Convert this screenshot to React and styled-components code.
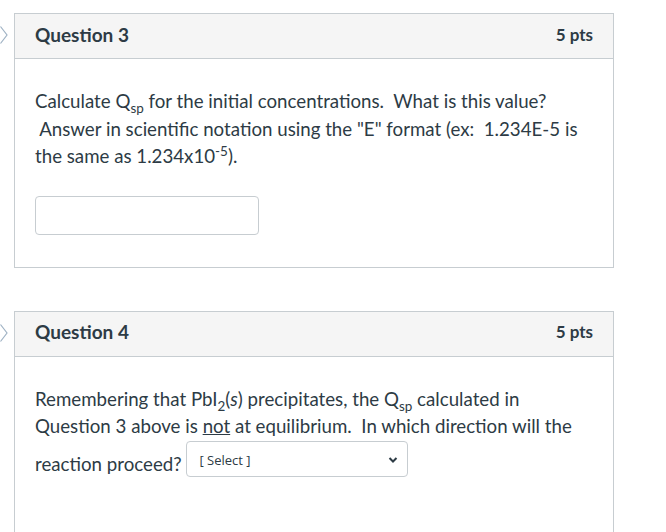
import styled, { createGlobalStyle } from 'styled-components';

const GlobalStyle = createGlobalStyle`
	html, body {
		margin: 0;
		padding: 0;
		background: #ffffff;
	}
	body {
		font-family: Lato, "Noto Sans", sans-serif;
		color: #2d3b45;
	}
`;

const Page = styled.div`
	display: flex;
	flex-direction: column;
	gap: 43px;
	padding: 13px 0 0 14px;
	width: 600px;
`;

const QuestionWrap = styled.div`
	position: relative;
`;

const Pointer = styled.svg`
	position: absolute;
	left: -14px;
	top: 13px;
	width: 8px;
	height: 18px;
`;

const Card = styled.div`
	border: 1px solid #c7cdd1;
	background: #ffffff;
	min-height: ${({ $minHeight }) => $minHeight || 'auto'};
`;

const Header = styled.div`
	display: flex;
	align-items: center;
	justify-content: space-between;
	box-sizing: border-box;
	height: 45px;
	padding: 0 20px 4px;
	background: #f5f5f5;
	border-bottom: 1px solid #c7cdd1;
`;

const Title = styled.h3`
	margin: 0;
	font-size: 19px;
	font-weight: 700;
	color: #2d3b45;
`;

const Points = styled.span`
	font-size: 17px;
	font-weight: 700;
	color: #2d3b45;
`;

const Body = styled.div`
	padding: 29px 20px 32px;
	font-size: 18.7px;
	line-height: 27.5px;
`;

const Paragraph = styled.p`
	margin: 0;
`;

const AnswerInput = styled.input`
	display: block;
	box-sizing: border-box;
	width: 224px;
	height: 39px;
	margin-top: 25px;
	border: 1px solid #c7cdd1;
	border-radius: 4px;
	background: #ffffff;
	font-family: Lato, sans-serif;
	font-size: 16px;
	padding: 0 10px;
	outline: none;
`;

const SelectBox = styled.span`
	display: inline-block;
	overflow: hidden;
	box-sizing: border-box;
	width: 222px;
	height: 36px;
	border: 1px solid #c7cdd1;
	border-radius: 4px;
	background: #ffffff;
	vertical-align: -6px;
`;

const SelectInner = styled.span`
	display: flex;
	align-items: center;
	height: 100%;
	padding: 0 9px 0 12px;
	font-family: "Open Sans", Lato, sans-serif;
	font-size: 13px;
	color: #2d3b45;
	line-height: 1;
`;

const SelectLabel = styled.span`
	flex: 1;
	padding-top: 3px;
`;

const Caret = styled.svg`
	width: 10px;
	height: 10px;
	margin-top: 2px;
`;

const Sub = styled.sub`
	font-size: 0.72em;
	line-height: 0;
`;

const Sup = styled.sup`
	font-size: 0.72em;
	line-height: 0;
`;

const PointerIcon = () => (
	<Pointer viewBox="0 0 8 18">
		<polyline points="0.5,0.5 7,9 0.5,17.5" fill="none" stroke="#9fb2c4" strokeWidth="1.2" />
	</Pointer>
);

export default function App() {
	return (
		<>
			<GlobalStyle />
			<Page>
				<QuestionWrap>
					<PointerIcon />
					<Card>
						<Header>
							<Title>Question 3</Title>
							<Points>5 pts</Points>
						</Header>
						<Body>
							<Paragraph>
								Calculate Q<Sub>sp</Sub> for the initial concentrations.{'\u00a0'} What is this value? {'\u00a0'}Answer in scientific notation using the "E" format (ex:{'\u00a0'} 1.234E-5 is the same as 1.234x10<Sup>-5</Sup>).
							</Paragraph>
							<AnswerInput type="text" />
						</Body>
					</Card>
				</QuestionWrap>
				<QuestionWrap>
					<PointerIcon />
					<Card $minHeight="240px">
						<Header>
							<Title>Question 4</Title>
							<Points>5 pts</Points>
						</Header>
						<Body>
							<Paragraph>
								Remembering that PbI<Sub>2</Sub>(<i>s</i>) precipitates, the Q<Sub>sp</Sub> calculated in Question 3 above is <u>not</u> at equilibrium.{'\u00a0'} In which direction will the reaction proceed?{' '}
								<SelectBox>
									<SelectInner>
										<SelectLabel>[ Select ]</SelectLabel>
										<Caret viewBox="0 0 10 10">
											<polyline points="1.5,3 5,6.5 8.5,3" fill="none" stroke="#2d3b45" strokeWidth="2" />
										</Caret>
									</SelectInner>
								</SelectBox>
							</Paragraph>
						</Body>
					</Card>
				</QuestionWrap>
			</Page>
		</>
	);
}
